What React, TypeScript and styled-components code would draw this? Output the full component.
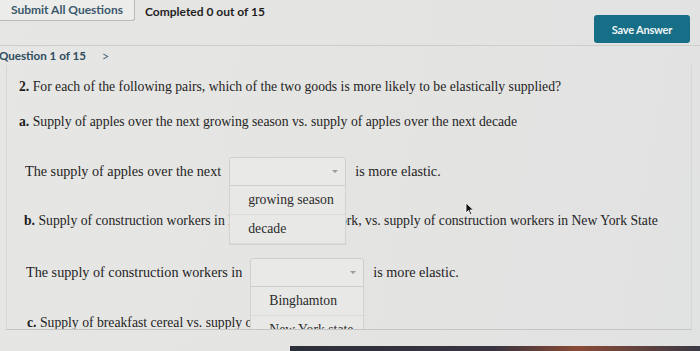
import React from "react";
import styled, { createGlobalStyle } from "styled-components";

const Global = createGlobalStyle`
  html, body { margin: 0; padding: 0; }
  body {
    width: 700px; height: 351px; overflow: hidden;
    background: #e3e3e1;
    font-family: "Lato", "Liberation Sans", sans-serif;
  }
`;

const Page = styled.div`
  width: 700px; height: 351px;
  display: flex; flex-direction: column;
  position: relative;
  background: linear-gradient(100deg, #e6e6e4 0%, #e4e4e2 50%, #e1e2e2 100%);
`;

const Header = styled.div`
  height: 45px;
  display: flex; align-items: flex-start;
  border-bottom: 1px solid #cdcdcb;
  box-sizing: content-box;
`;

const SubmitBtn = styled.div`
  width: 135px; height: 22px; box-sizing: border-box;
  margin-top: -1px;
  border: 1px solid #b9b9b9; border-top: none; border-left: none;
  border-radius: 0 0 3px 0;
  background: #ececea;
  color: #3b586b; font-size: 12px; font-weight: 700;
  display: flex; align-items: center; justify-content: center;
`;

const Completed = styled.div`
  margin-left: 10px; margin-top: 4px;
  color: #1f1f1f; font-size: 12px; font-weight: 700;
`;

const SaveBtn = styled.div`
  margin-left: auto; margin-right: 10px; margin-top: 15px;
  width: 96px; height: 28px; border-radius: 3px;
  background: #176f87; color: #f2f6f7;
  font-size: 11px; font-weight: 700; letter-spacing: -0.2px;
  display: flex; align-items: center; justify-content: center;
`;

const Nav = styled.div`
  height: 19px; display: flex; align-items: center;
  margin-left: -1px;
  color: #2d4b5e; font-size: 11.6px; font-weight: 700;
`;

const NavArrow = styled.span`
  margin-left: 16px; color: #4f6e82; font-weight: 400; font-size: 13px;
`;

const Panel = styled.div`
  margin-left: 6px; width: 684px; height: 264px;
  border-left: 1px solid #d6d6d4; border-right: 1px solid #d6d6d4;
  border-bottom: 1px solid #c4c4c2;
  overflow: hidden; position: relative;
  font-family: "Liberation Serif", "Times New Roman", serif;
  color: #1e1e1e; font-size: 13.7px;
`;

const Line = styled.div<{ $top: number; $indent: number }>`
  margin-top: ${(p) => p.$top}px;
  padding-left: ${(p) => p.$indent}px;
  line-height: 20px; white-space: nowrap;
`;

const Row = styled.div<{ $top: number; $indent: number }>`
  margin-top: ${(p) => p.$top}px;
  padding-left: ${(p) => p.$indent}px;
  display: flex; align-items: center; height: 29px;
  white-space: nowrap; font-size: 14.2px;
`;

const SelectWrap = styled.div<{ $w: number }>`
  position: relative; width: ${(p) => p.$w}px; margin: 0 9px 0 8px;
  z-index: 2; font-size: 13.7px;
`;

const SelectBox = styled.div`
  height: 29px; box-sizing: border-box;
  border: 1px solid #cfcfcd; border-radius: 3px 3px 0 0;
  background: #e9e9e8;
  display: flex; align-items: center; justify-content: flex-end;
  padding-right: 7px;
`;

const Caret = styled.span`
  width: 0; height: 0;
  border-left: 3px solid transparent; border-right: 3px solid transparent;
  border-top: 3px solid #9a9a9a;
`;

const Menu = styled.div`
  position: absolute; left: 0; top: 29px; width: 100%;
  background: #e8e8e7; box-sizing: border-box;
  border: 1px solid #d2d2d0; border-top: none;
`;

const Option = styled.div`
  height: 29px; line-height: 28px; padding-left: 18px;
  border-bottom: 1px solid #dadad8; box-sizing: border-box;
  color: #2a2a2a;
`;

const Footer = styled.div`
  flex: 1; display: flex; align-items: flex-end;
`;

const Taskbar = styled.div`
  margin-left: 290px; flex: 1; height: 5px;
  background: linear-gradient(90deg, #2b2f3a 0%, #3a3440 50%, #8a4a35 70%, #3b3a45 100%);
`;

const Cursor = styled.svg`
  position: absolute; left: 465px; top: 202px; z-index: 5;
`;

export default function App() {
  return (
    <Page>
      <Global />
      <Header>
        <SubmitBtn>Submit All Questions</SubmitBtn>
        <Completed>Completed 0 out of 15</Completed>
        <SaveBtn>Save Answer</SaveBtn>
      </Header>
      <Nav>
        Question 1 of 15<NavArrow>&gt;</NavArrow>
      </Nav>
      <Panel>
        <Line $top={12} $indent={12}>
          <b>2.</b> For each of the following pairs, which of the two goods is more likely to be elastically supplied?
        </Line>
        <Line $top={15} $indent={12}>
          <b>a.</b> Supply of apples over the next growing season vs. supply of apples over the next decade
        </Line>
        <Row $top={25} $indent={18}>
          The supply of apples over the next
          <SelectWrap $w={117}>
            <SelectBox><Caret /></SelectBox>
            <Menu>
              <Option>growing season</Option>
              <Option>decade</Option>
            </Menu>
          </SelectWrap>
          is more elastic.
        </Row>
        <Line $top={25} $indent={17}>
          <b>b.</b> Supply of construction workers in Binghamton, New York, vs. supply of construction workers in New York State
        </Line>
        <Row $top={27} $indent={19}>
          The supply of construction workers in
          <SelectWrap $w={114}>
            <SelectBox><Caret /></SelectBox>
            <Menu>
              <Option>Binghamton</Option>
              <Option>New York state</Option>
            </Menu>
          </SelectWrap>
          is more elastic.
        </Row>
        <Line $top={26} $indent={20}>
          <b>c.</b> Supply of breakfast cereal vs. supply of automobiles
        </Line>
      </Panel>
      <Footer>
        <Taskbar />
      </Footer>
      <Cursor width="10" height="14" viewBox="0 0 10 14">
        <path d="M1 1 L1 11 L3.5 8.5 L5.5 13 L7 12.3 L5 8 L8.5 8 Z" fill="#111" stroke="#fff" strokeWidth="0.8" />
      </Cursor>
    </Page>
  );
}
